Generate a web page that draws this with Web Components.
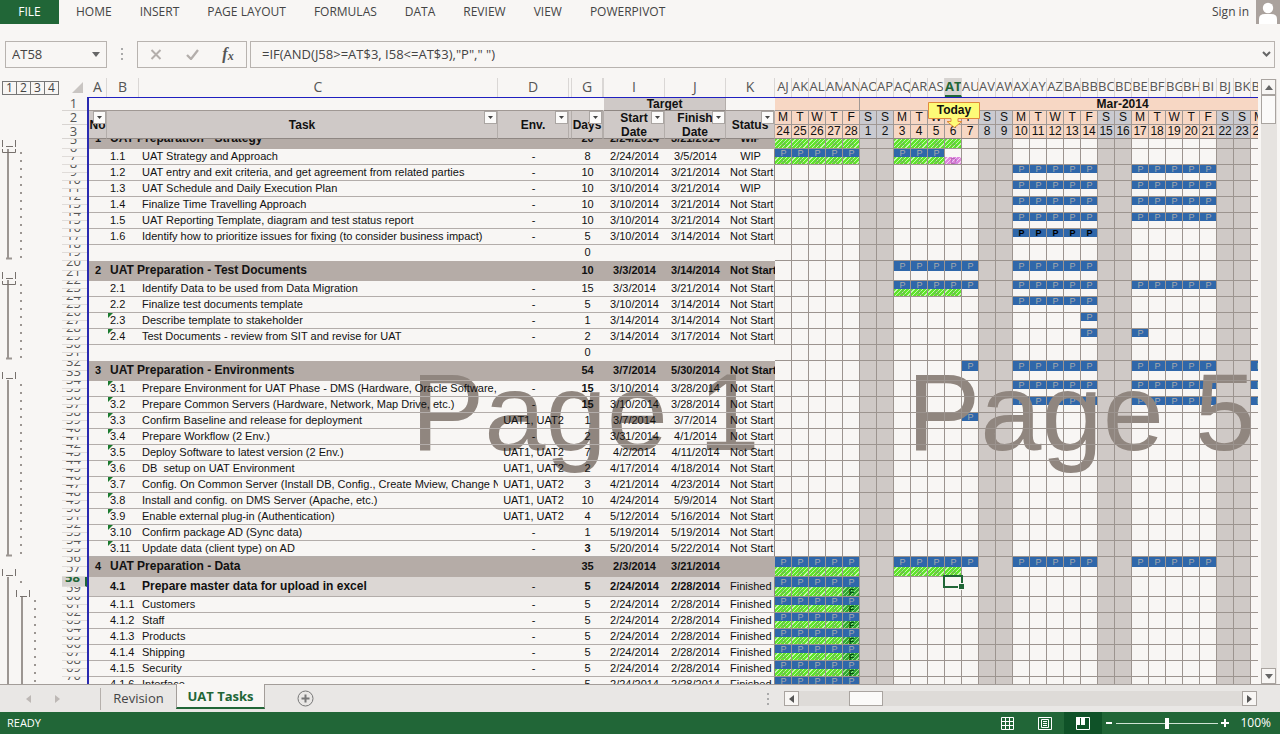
<!DOCTYPE html>
<html lang="en">
<head>
<meta charset="utf-8">
<title>UAT Tasks</title>
<style>
  html, body { height: 100%; }
  body { margin: 0; background: #f8f6f4; font-family: "Open Sans", "Noto Sans", sans-serif; color: #444; }
</style>
</head>
<body>
<workbook-app></workbook-app>

<script>
const define = (name, css, html, setup) => {
  customElements.define(name, class extends HTMLElement {
    constructor() {
      super();
      const root = this.attachShadow({ mode: "open" });
      const markup = typeof html === "function" ? html(this) : html;
      root.innerHTML = `<style>*{box-sizing:border-box}button,input{font:inherit;color:inherit;margin:0;padding:0;border:0;background:none;border-radius:0}${css}</style>${markup}`;
      if (setup) setup(root, this);
    }
  });
};

/* ---------- data ---------- */
const PX_DAY = 17;
const LETTERS = "AJ AK AL AM AN AO AP AQ AR AS AT AU AV AW AX AY AZ BA BB BC BD BE BF BG BH BI BJ BK BL".split(" ");
const WEEKDAYS = [..."MTWTFSSMTWTFSSMTWTFSSMTWTFSSM"];
const DATES = [24, 25, 26, 27, 28, ...Array.from({ length: 24 }, (_, i) => i + 1)];
const weekend = i => i % 7 > 4;
const SELECTED = 10;

const W1 = "0-4", W2 = "7-11", W3 = "14-18", W4 = "21-25", W5 = "28-28";
/* kind, no, title, env, days, start, finish, status, plan, actual, extra */
const ROWS = [
  ["section", "1", "UAT Preparation - Strategy", "", "20", "2/24/2014", "3/21/2014", "WIP", "", "0-4 7-10"],
  ["task", "1.1", "UAT Strategy and Approach", "-", "8", "2/24/2014", "3/5/2014", "WIP", "0-4 7-9", "0-4 7-9", { delay: 10 }],
  ["task", "1.2", "UAT entry and exit criteria, and get agreement from related parties", "-", "10", "3/10/2014", "3/21/2014", "Not Start", `${W3} ${W4}`],
  ["task", "1.3", "UAT Schedule and Daily Execution Plan", "-", "10", "3/10/2014", "3/21/2014", "WIP", `${W3} ${W4}`],
  ["task", "1.4", "Finalize Time Travelling Approach", "-", "10", "3/10/2014", "3/21/2014", "Not Start", `${W3} ${W4}`],
  ["task", "1.5", "UAT Reporting Template, diagram and test status report", "-", "10", "3/10/2014", "3/21/2014", "Not Start", `${W3} ${W4}`],
  ["task", "1.6", "Identify how to prioritize issues for fixing (to consider business impact)", "-", "5", "3/10/2014", "3/14/2014", "Not Start", W3, "", { dark: true }],
  ["blank", "", "", "", "0", "", "", ""],
  ["section", "2", "UAT Preparation - Test Documents", "", "10", "3/3/2014", "3/14/2014", "Not Start", `${W2} ${W3}`],
  ["task", "2.1", "Identify Data to be used from Data Migration", "-", "15", "3/3/2014", "3/21/2014", "Not Start", `${W2} ${W3} ${W4}`, "7-10"],
  ["task", "2.2", "Finalize test documents template", "-", "5", "3/10/2014", "3/14/2014", "Not Start", W3],
  ["task", "2.3", "Describe template to stakeholder", "-", "1", "3/14/2014", "3/14/2014", "Not Start", "18-18", "", { mark: true }],
  ["task", "2.4", "Test Documents - review from SIT and revise for UAT", "-", "2", "3/14/2014", "3/17/2014", "Not Start", "18-18 21-21", "", { mark: true }],
  ["blank", "", "", "", "0", "", "", ""],
  ["section", "3", "UAT Preparation - Environments", "", "54", "3/7/2014", "5/30/2014", "Not Start", `11-11 ${W3} ${W4} ${W5}`],
  ["task", "3.1", "Prepare Environment for UAT Phase - DMS (Hardware, Oracle Software,", "-", "15", "3/10/2014", "3/28/2014", "Not Start", `${W3} ${W4} ${W5}`, "", { mark: true, strong: true }],
  ["task", "3.2", "Prepare Common Servers (Hardware, Network, Map Drive, etc.)", "-", "15", "3/10/2014", "3/28/2014", "Not Start", `${W3} ${W4} ${W5}`, "", { mark: true, strong: true }],
  ["task", "3.3", "Confirm Baseline and release for deployment", "UAT1, UAT2", "1", "3/7/2014", "3/7/2014", "Not Start", "11-11", "", { mark: true }],
  ["task", "3.4", "Prepare Workflow (2 Env.)", "-", "2", "3/31/2014", "4/1/2014", "Not Start", "", "", { mark: true }],
  ["task", "3.5", "Deploy Software to latest version (2 Env.)", "UAT1, UAT2", "7", "4/2/2014", "4/11/2014", "Not Start", "", "", { mark: true }],
  ["task", "3.6", "DB  setup on UAT Environment", "UAT1, UAT2", "2", "4/17/2014", "4/18/2014", "Not Start", "", "", { mark: true }],
  ["task", "3.7", "Config. On Common Server (Install DB, Config., Create Mview, Change NLS", "UAT1, UAT2", "3", "4/21/2014", "4/23/2014", "Not Start", "", "", { mark: true }],
  ["task", "3.8", "Install and config. on DMS Server (Apache, etc.)", "UAT1, UAT2", "10", "4/24/2014", "5/9/2014", "Not Start", "", "", { mark: true }],
  ["task", "3.9", "Enable external plug-in (Authentication)", "UAT1, UAT2", "4", "5/12/2014", "5/16/2014", "Not Start", "", "", { mark: true }],
  ["task", "3.10", "Confirm package AD (Sync data)", "-", "1", "5/19/2014", "5/19/2014", "Not Start", "", "", { mark: true }],
  ["task", "3.11", "Update data (client type) on AD", "-", "3", "5/20/2014", "5/22/2014", "Not Start", "", "", { mark: true, strong: true }],
  ["section", "4", "UAT Preparation - Data", "", "35", "2/3/2014", "3/21/2014", "", `${W1} ${W2} ${W3} ${W4}`, "0-4 7-10"],
  ["sub", "4.1", "Prepare master data for upload in excel", "-", "5", "2/24/2014", "2/28/2014", "Finished", W1, "0-3", { done: 4 }],
  ...["Customers", "Staff", "Products", "Shipping", "Security", "Interface"].map((t, i) =>
    ["task", `4.1.${i + 1}`, t, "-", "5", "2/24/2014", "2/28/2014", "Finished", W1, "0-3", { done: 4 }])
];
const within = (spans, i) => (spans || "").split(" ").some(s => {
  const [a, b] = s.split("-").map(Number);
  return s !== "" && i >= a && i <= b;
});

const COLS = [18, 32, 359, 71, 3, 31, 1, 61, 61, 49];
const colgroup = `<colgroup>${COLS.map(w => `<col style="width:${w}px">`).join("")}<col span="29" style="width:${PX_DAY}px"></colgroup>`;
const TABLE_CSS = `
  table{table-layout:fixed;border-spacing:0;width:${COLS.reduce((a, b) => a + b) + 29 * PX_DAY}px;color:#111;
    font:11px/14px "Liberation Sans",Arial,sans-serif}
  th,td{padding:0;text-align:center;white-space:nowrap;overflow:hidden}`;

/* ---------- ribbon ---------- */
define("ribbon-tabs", `
  :host{display:flex;align-items:center;height:24px;font-size:12px;line-height:16px;color:#444}
  nav{display:flex;gap:28px;height:24px}
  button{height:24px;white-space:nowrap}
  .file{background:#216637;color:#fff;width:59px;margin-right:-11px}
  .user{margin-left:auto;display:flex;gap:7px;align-items:center}
  a{color:inherit;text-decoration:none}
  svg{display:block}`,
  `<nav><button class="file">FILE</button>${["HOME", "INSERT", "PAGE LAYOUT", "FORMULAS", "DATA", "REVIEW", "VIEW", "POWERPIVOT"].map(t => `<button>${t}</button>`).join("")}</nav>
   <div class="user"><a href="#">Sign in</a>
   <svg width="24" height="24" viewBox="0 0 24 24"><rect width="24" height="24" fill="#aaa29d"/><circle cx="12" cy="8" r="5.2" fill="#fff"/><path d="M3 24v-5q0-5 6-5h6q6 0 6 5v5z" fill="#fff"/></svg></div>`);

define("formula-bar", `
  :host{display:flex;margin-top:16px;padding:0 5px;height:28px;font-size:13px;line-height:18px;color:#444;align-items:center}
  .box{display:flex;align-items:center;height:27px;border:1px solid #b8b3af}
  .name{width:102px}
  .name input{width:80px;padding-left:6px}
  .name button,.more{width:20px;height:20px;display:grid;place-items:center;flex:none}
  .grip{width:30px;display:grid;place-items:center}
  .tools{width:110px;justify-content:space-around;margin-right:3px}
  .tools button{display:grid;place-items:center;width:30px}
  .fx{font:italic bold 16px/20px "Liberation Serif",serif;color:#555}
  .fx sub{font-size:12px;line-height:0;vertical-align:-1px}
  .formula{flex:1}
  .formula input{flex:1;padding-left:11px;min-width:0}
  .formula .more{margin-right:-2px}`,
  `<div class="box name"><input aria-label="Name box" value="AT58"><button aria-label="Names"><svg width="8" height="5"><path d="M0 0h8L4 5z" fill="#666"/></svg></button></div>
   <div class="grip"><svg width="2" height="12"><path d="M0 0h2v2H0zM0 5h2v2H0zM0 10h2v2H0z" fill="#aaa"/></svg></div>
   <div class="box tools">
     <button aria-label="Cancel"><svg width="12" height="11"><path d="M1.500 1l9 9M10.500 1l-9 9" stroke="#b3aeab" stroke-width="2"/></svg></button>
     <button aria-label="Enter"><svg width="13" height="11"><path d="M1 6l4 4 7-9" stroke="#b3aeab" stroke-width="2.300" fill="none"/></svg></button>
     <button aria-label="Insert function" class="fx"><span>f<sub>x</sub></span></button></div>
   <div class="box formula"><input aria-label="Formula" value='=IF(AND(J58&gt;=AT$3, I58&lt;=AT$3),"P"," ")'>
     <button class="more" aria-label="Expand"><svg width="9" height="6"><path d="M1 1l3.500 3.500L8 1" stroke="#666" stroke-width="2" fill="none"/></svg></button></div>`);

/* ---------- sheet ---------- */
define("outline-levels", `
  :host{display:flex;width:62px;padding:3px 0 0 2px;font:12px/12px "Open Sans",sans-serif}
  button{width:15px;height:14px;border:1px solid #777;margin-right:-1px}`,
  [1, 2, 3, 4].map(n => `<button>${n}</button>`).join(""));

define("column-letters", `
  :host{display:flex;height:19px;font-size:14px;line-height:17px;color:#555}
  span{flex:none;text-align:center;overflow:hidden;border-right:1px solid #dad7d5;white-space:nowrap;height:19px}
  .day{width:${PX_DAY}px;font-size:13px}
  .on{background:#d6d3d0;color:#216637;font-weight:bold;border-bottom:2px solid #216637}`,
  COLS.map((w, i) => `<span style="width:${w}px">${["A", "B", "C", "D", "", "G", "", "I", "J", "K"][i]}</span>`).join("") +
  LETTERS.map((l, i) => `<span class="day${i === SELECTED ? " on" : ""}">${l}</span>`).join(""));

define("filter-button", `
  :host{display:block;position:absolute;top:0;right:0;width:13px;height:13px}
  button{display:grid;place-items:center;width:13px;height:13px;background:#fbfaf9;border:1px solid #aaa5a2}
  svg{display:block}`,
  `<button aria-label="Filter"><svg width="5" height="3"><path d="M0 0h5L2.500 3z" fill="#444"/></svg></button>`);

define("today-flag", `
  :host{display:block;position:absolute;left:152px;top:4px;width:52px;height:26px;z-index:3}
  svg{position:absolute;inset:0}
  b{position:relative;display:block;text-align:center;font:bold 12px/17px "Liberation Sans",sans-serif;color:#111}`,
  `<svg width="52" height="26"><path d="M.5.5h51v16H30v3h4l-7.500 6-7.500-6h4v-3H.5z" fill="#fdfb77" stroke="#e08a3c"/></svg><b>Today</b>`);

const head = (label, extra = "") => `<th rowspan="2" class="g ${extra}"><div class="h"><span>${label}</span><filter-button></filter-button></div></th>`;
define("sheet-header", `:host{display:block;position:relative}${TABLE_CSS}
  tr.r1{height:13px}tr.r2,tr.r3{height:14px}
  th{border-right:1px solid #b3adaa;border-bottom:1px solid #a09894;height:14px}
  .r1 th{height:13px;font-size:12px;line-height:12px}
  .r1 .w{border-right-color:transparent}
  .r3 th,.g{border-bottom-color:#8f8783}
  .g{background:#cfc9c7}
  .h{position:relative;height:27px;display:grid;place-items:center;line-height:14px;font-size:12px}
  .d{font-weight:normal;background:#f7d7c4;border-color:#a09894;font-size:12px;line-height:13px}
  .we{background:#cacad0}
  .month{background:#f7d7c4;padding-left:118px;border-color:#a09894}
  .anchor{position:absolute;left:687px;top:0;width:0;height:0}`,
  `<table>${colgroup}
   <tr class="r1"><th class="w" colspan="7"></th><th class="g" colspan="2">Target</th><th class="w"></th><th class="month" style="padding:0" colspan="5"></th><th class="month" colspan="24">Mar-2014</th></tr>
   <tr class="r2">${head("No")}${head("Task", "").replace("<th ", '<th colspan="2" ')}${head("Env.")}<th class="g" rowspan="2"></th>${head("Days")}<th class="g" rowspan="2"></th>${head("Start<br>Date")}${head("Finish<br>Date")}${head("Status")}
   ${WEEKDAYS.map((d, i) => `<th class="d${weekend(i) ? " we" : ""}">${d}</th>`).join("")}</tr>
   <tr class="r3">${DATES.map((d, i) => `<th class="d${weekend(i) ? " we" : ""}">${d}</th>`).join("")}</tr>
   </table><div class="anchor"><today-flag></today-flag></div>`);

const dayCell = (row, i) => {
  const [kind, , , , , , , , plan, actual, x = {}] = row;
  const p = within(plan, i) ? `<i class="p${x.dark ? " dark" : ""}">P</i>` : "<i></i>";
  const a = within(actual, i) ? `<i class="a">A</i>` : x.delay === i ? `<i class="dl">D</i>` : x.done === i ? `<i class="f">F</i>` : "<i></i>";
  const sel = kind === "sub" && i === SELECTED ? `<span class="sel"></span>` : "";
  return `<td class="day${weekend(i) ? " we" : ""}${sel ? " open" : ""}">${p}${a}${sel}</td>`;
};
define("task-grid", `
  :host{display:block;position:relative;margin-top:-10px}${TABLE_CSS}
  tr{height:16px}.section,.sub{height:20px}
  td{position:relative;height:16px;line-height:14px;vertical-align:top}
  .section td,.sub td{height:20px;line-height:18px}
  td::after{content:"";position:absolute;inset:0;z-index:2;border-bottom:1px solid #b3adaa}
  td span{position:relative;z-index:3}
  .l{text-align:left;padding-left:3px;white-space:pre}
  .section td{font-weight:bold;background:#b5aca7}
  .sub td{background:#dcd7d4}
  .sub .num,.sub .l{font-weight:bold}
  .section td::after{border-color:#b5aca7}
  .section .l,.sub .l.t{font-size:12px}
  .st{text-align:left;padding-left:4px}
  .st.c{text-align:center;padding:0}
  .blank .lab::after{border-color:transparent}
  .k::after{border-right:1px solid #8f8783}
  b{font-weight:bold}
  .mark::before{content:"";position:absolute;left:1px;top:0;border-top:5px solid #1a7a2e;border-right:5px solid transparent;z-index:3}
  tr .day,tr.section .day,tr.sub .day{background:#f8f6f4;vertical-align:top}
  tr .day.we,tr.section .day.we,tr.sub .day.we{background:#cfc9c6}
  tr .day::after,tr.section .day::after{border-right:1px solid #9c948f;border-bottom:1px solid #9c948f}
  .day i{display:block;height:8px;overflow:hidden;font:9px/8px "Liberation Sans",sans-serif;color:#a9aaac}
  .day i+i{height:7px}
  .section .day i,.sub .day i{height:10px;line-height:10px}
  .section .day i+i,.sub .day i+i{height:9px}
  .day .p{background:#2f67aa}
  .day .p.dark{color:#000;font-weight:bold}
  .day .a{background:repeating-linear-gradient(135deg,#5fe32b 0 2px,#c4f7ae 2px 3px);color:#6fae54}
  .day .f{background:repeating-linear-gradient(135deg,#33a832 0 2px,#9be08f 2px 3px);color:#064d0a;font-weight:bold}
  .day .dl{background:repeating-linear-gradient(135deg,#de86de 0 2px,#f5d3f5 2px 3px);color:#b05fb0}
  .day.open{overflow:visible}
  .sel{position:absolute!important;left:-2px;top:-2px;width:20px;height:13px;border:2px solid #216637;z-index:4}
  .sel::after{content:"";position:absolute;right:-4px;bottom:-4px;width:5px;height:5px;background:#216637;border:1px solid #f8f6f4;box-sizing:content-box}
  .page{position:absolute;top:228px;z-index:1;font:110px/110px "Liberation Sans",Arial,sans-serif;color:#90867f;white-space:nowrap;pointer-events:none}
  .p1{left:322px}.p5{left:818px}`,
  `<table>${colgroup}${ROWS.map(r => {
    const [kind, no, title, env, days, start, finish, status, , , x = {}] = r;
    const c = (t, cls = "") => `<td class="lab ${cls}">${t ? `<span>${t}</span>` : ""}</td>`;
    const sec = kind === "section";
    const bold = t => kind === "sub" ? `<b>${t}</b>` : t;
    const name = sec ? `${c(no)}<td class="lab l" colspan="2"><span>${title}</span></td>`
      : `${c("")}${c(no, "l num" + (x.mark ? " mark" : ""))}${c(title, "l t")}`;
    return `<tr class="${kind}">${name}${c(env)}${c("")}${c(x.strong ? `<b>${days}</b>` : bold(days))}${c("")}${c(bold(start))}${c(bold(finish))}${c(status, "k st" + (status === "WIP" ? " c" : ""))}${LETTERS.map((_, i) => dayCell(r, i)).join("")}</tr>`;
  }).join("")}</table><div class="page p1">Page 1</div><div class="page p5">Page 5</div>`);

define("row-numbers", `
  :host{display:block;width:25px;margin-top:-10px;font-size:13px;line-height:17px;color:#555}
  div{display:flex;align-items:flex-end;justify-content:center;height:8px;overflow:hidden;border-bottom:1px solid #e0dcd9;padding-right:2px}
  .tall{height:10px}
  .on{background:#d6d3d0;color:#216637;font-weight:bold;border-right:2px solid #216637}`,
  ROWS.map((r, i) => [4, 5].map(n => n + 2 * i).map(n =>
    `<div class="${r[0] === "section" || r[0] === "sub" ? "tall" : ""}${n === 58 ? " on" : ""}">${n}</div>`).join("")).join(""));

const dots = (x, y1, y2) => { let s = ""; for (let y = y1; y <= y2; y += 8) s += `M${x} ${y}h2v2h-2z`; return s; };
const knob = (x, y) => `M${x}.5 ${y}v7M${x + 13}.5 ${y}v7M${x + 4} ${y + 6}.5h7`;
define("outline-rail", `:host{display:block;width:62px}svg{display:block}`,
  `<svg width="62" height="546"><path d="M8 10v109M6 119.500h6M8 141v79M6 219.500h6M8 241v175M6 416.500h6M8 438v110M22 458v90" stroke="#9c9692" stroke-width="2" fill="none"/>
   <path d="${knob(2, 1)}M2.500 10v3.500h13V10${knob(2, 133)}M2.500 142v3.500h13V142${knob(2, 233)}${knob(2, 430)}${knob(16, 451)}" stroke="#77716d" fill="none"/>
   <path d="${dots(20, 13, 119)}${dots(20, 145, 219)}${dots(20, 245, 415)}${dots(20, 442, 442)}${dots(34, 461, 545)}" fill="#9c9692"/></svg>`);

define("v-scroll", `
  :host{display:flex;flex-direction:column;width:16px;margin:1px 3px 0 3px;background:#e6e3e0}
  button{display:grid;place-items:center;width:15px;height:16px;border:1px solid #a9a4a0;background:#f8f6f4}
  .thumb{width:15px;height:29px;border:1px solid #a9a4a0;background:#fbfaf9}
  .down{margin-top:auto}`,
  `<button aria-label="Scroll up"><svg width="8" height="5"><path d="M0 5h8L4 0z" fill="#666"/></svg></button><div class="thumb"></div><button class="down" aria-label="Scroll down"><svg width="8" height="5"><path d="M0 0h8L4 5z" fill="#666"/></svg></button>`);

define("sheet-view", `
  :host{display:flex;flex:1;min-height:0;margin-top:10px}
  main{flex:1;min-width:0;display:flex;flex-direction:column;overflow:hidden}
  .row{display:flex;flex:none}
  .corner{width:25px;flex:none;display:flex;align-items:flex-end;justify-content:flex-end;padding:0 4px 4px 0}
  .letters{height:19px}
  .letters column-letters{margin-left:2px}
  .head-nums{width:25px;margin-left:62px;flex:none;font-size:13px;color:#555;text-align:center}
  .head-nums div{height:14px;line-height:12px;border-bottom:1px solid #d8d4d1;padding-right:2px}
  .pane{border-left:2px solid #2a2ab0;flex:1;min-width:0;overflow:hidden}
  .top{border-top:1px solid #2020c0}
  .row.body{flex:1;min-height:0;overflow:hidden}
  outline-levels,outline-rail,row-numbers{flex:none}`,
  `<main>
    <div class="row letters"><outline-levels></outline-levels><div class="corner"><svg width="11" height="11"><path d="M11 0v11H0z" fill="#c9c5c2"/></svg></div><column-letters></column-letters></div>
    <div class="row"><div class="head-nums"><div>1</div><div>2</div><div>3</div></div><div class="pane top"><sheet-header></sheet-header></div></div>
    <div class="row body"><outline-rail></outline-rail><row-numbers></row-numbers><div class="pane"><task-grid></task-grid></div></div>
  </main><v-scroll></v-scroll>`);

/* ---------- bottom bars ---------- */
define("sheet-tabs", `
  :host{display:flex;height:28px;background:#e9e7e5;border-top:1px solid #a39d99;font-size:13px;line-height:18px;padding-right:23px}
  .nav{width:101px;height:22px;margin-top:3px;border-right:1px solid #b5b0ac;display:flex;gap:24px;align-items:center;padding-left:26px}
  .nav button{width:5px;height:8px;display:grid}
  .tab{height:25px;width:75px;white-space:nowrap}
  .on{width:89px;margin-top:-1px;background:#f8f6f4;color:#216637;font-weight:bold;border:1px solid #a39d99;border-top:0;border-bottom:2px solid #216637}
  .add{margin:5px 0 0 32px;width:17px;height:17px}
  .bar{margin-left:auto;width:39%;display:flex;align-items:center;height:27px}
  .bar>svg{margin-right:15px;flex:none}
  .bar button{width:15px;height:15px;border:1px solid #a9a4a0;background:#f8f6f4;display:grid;place-items:center;flex:none}
  .track{flex:1;height:15px;background:#dedbd8;padding-left:50px}
  .thumb{width:34px;height:15px;border:1px solid #a9a4a0;background:#fbfaf9}`,
  `<div class="nav"><button aria-label="Previous sheet"><svg width="5" height="8"><path d="M5 0v8L0 4z" fill="#bdb8b5"/></svg></button><button aria-label="Next sheet"><svg width="5" height="8"><path d="M0 0v8l5-4z" fill="#bdb8b5"/></svg></button></div>
   <button class="tab">Revision</button><button class="tab on">UAT Tasks</button>
   <button class="add" aria-label="New sheet"><svg width="17" height="17"><circle cx="8.500" cy="8.500" r="7.500" fill="none" stroke="#777"/><path d="M8.500 4.500v8M4.500 8.500h8" stroke="#777" stroke-width="2"/></svg></button>
   <div class="bar"><svg width="2" height="12"><path d="M0 0h2v2H0zM0 5h2v2H0zM0 10h2v2H0z" fill="#aaa"/></svg>
   <button aria-label="Scroll left"><svg width="5" height="8"><path d="M5 0v8L0 4z" fill="#555"/></svg></button><div class="track"><div class="thumb"></div></div><button aria-label="Scroll right"><svg width="5" height="8"><path d="M0 0v8l5-4z" fill="#555"/></svg></button></div>`);

define("status-bar", `
  :host{display:flex;align-items:center;height:22px;background:#216637;color:#fff;font-size:11px;line-height:16px;padding:0 9px 0 7px}
  .tools{margin-left:auto;display:flex;align-items:center}
  button{width:38px;height:22px;display:grid;place-items:center}
  .on{background:#0f5228}
  .z{width:14px}
  input{-webkit-appearance:none;appearance:none;width:102px;height:22px;background:linear-gradient(#cfe3d4,#cfe3d4) center/100% 1px no-repeat}
  input::-webkit-slider-thumb{-webkit-appearance:none;width:4px;height:11px;background:#fff}
  output{width:39px;text-align:right;font-size:12px}`,
  `<span>READY</span><div class="tools">
   <button aria-label="Normal"><svg width="13" height="13"><path d="M.5.5h12v12H.5zM4.500 0v13M8.500 0v13M0 4.500h13M0 8.500h13" stroke="#fff" fill="none"/></svg></button>
   <button aria-label="Page layout"><svg width="14" height="13"><path d="M.5.5h13v12H.5zM3.500 2.500h7v8h-7zM5 4.500h4M5 6.500h4M5 8.500h4" stroke="#fff" fill="none"/></svg></button>
   <button class="on" aria-label="Page break preview"><svg width="14" height="13"><path d="M.5.5h13v12H.5z" stroke="#fff" fill="none"/><path d="M0 0h4v8H0zM5 0h4v8H5z" fill="#fff"/></svg></button>
   <button class="z" aria-label="Zoom out"><svg width="6" height="2"><path d="M0 0h6v2H0z" fill="#fff"/></svg></button>
   <input type="range" aria-label="Zoom" min="0" max="100" value="50">
   <button class="z" aria-label="Zoom in"><svg width="8" height="8"><path d="M3 0h2v3h3v2H5v3H3V5H0V3h3z" fill="#fff"/></svg></button>
   <output>100%</output></div>`);

define("workbook-app", `:host{display:flex;flex-direction:column;height:100vh;overflow:hidden}`,
  `<ribbon-tabs></ribbon-tabs><formula-bar></formula-bar><sheet-view></sheet-view><sheet-tabs></sheet-tabs><status-bar></status-bar>`);
</script>
</body>
</html>
